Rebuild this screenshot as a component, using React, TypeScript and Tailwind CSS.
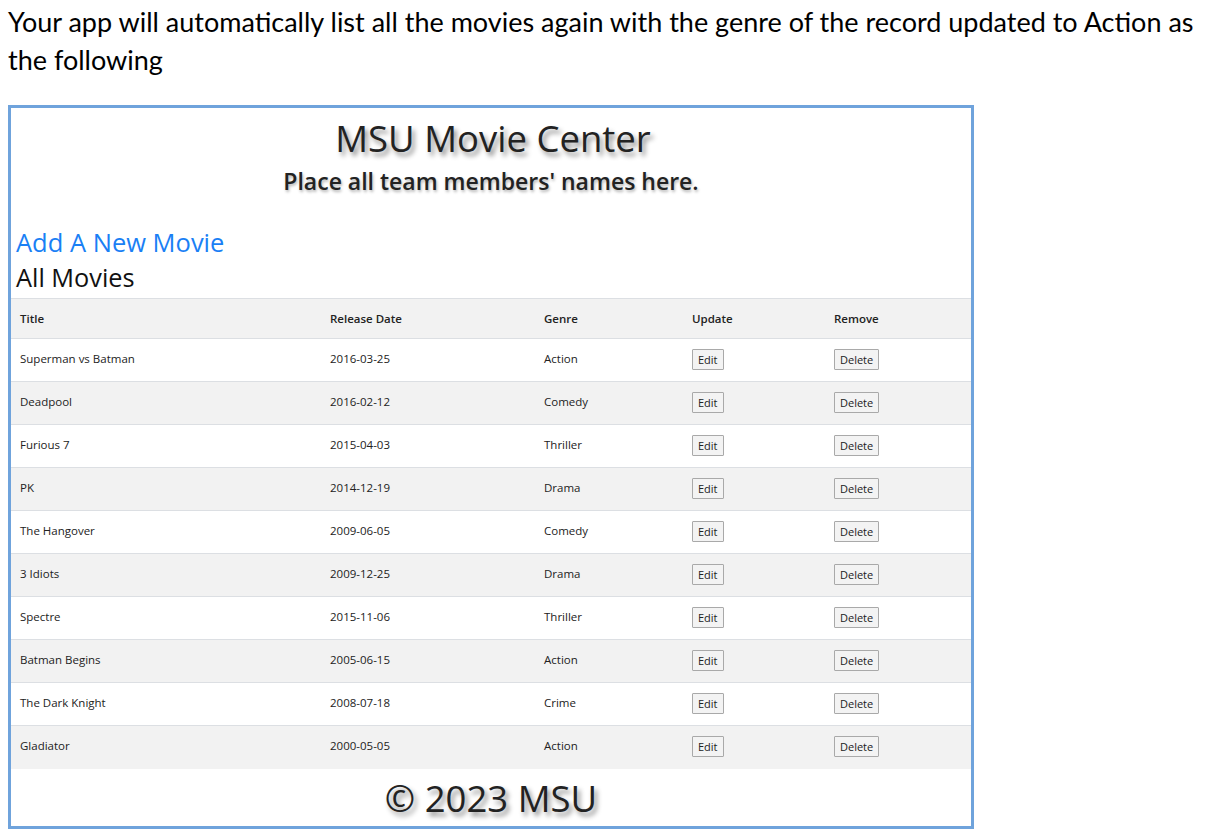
import { FC } from "react";

type Movie = {
	title: string;
	releaseDate: string;
	genre: string;
};

const movies: Array<Movie> = [
	{ title: "Superman vs Batman", releaseDate: "2016-03-25", genre: "Action" },
	{ title: "Deadpool", releaseDate: "2016-02-12", genre: "Comedy" },
	{ title: "Furious 7", releaseDate: "2015-04-03", genre: "Thriller" },
	{ title: "PK", releaseDate: "2014-12-19", genre: "Drama" },
	{ title: "The Hangover", releaseDate: "2009-06-05", genre: "Comedy" },
	{ title: "3 Idiots", releaseDate: "2009-12-25", genre: "Drama" },
	{ title: "Spectre", releaseDate: "2015-11-06", genre: "Thriller" },
	{ title: "Batman Begins", releaseDate: "2005-06-15", genre: "Action" },
	{ title: "The Dark Knight", releaseDate: "2008-07-18", genre: "Crime" },
	{ title: "Gladiator", releaseDate: "2000-05-05", genre: "Action" }
];

const SmallButton: FC<{ label: string }> = ({ label }) => (
	<button className="h-[21px] px-[5px] text-[11px] leading-none text-[#222] bg-[#f3f3f3] border border-[#a9a9a9] rounded-[1px]">
		{label}
	</button>
);

const MovieRow: FC<{ movie: Movie; index: number }> = ({ movie, index }) => (
	<tr className={`h-[43px] border-t border-[#dcdfe3] ${index % 2 === 1 ? "bg-[#f2f2f2]" : "bg-white"}`}>
		<td className="pl-[9px] align-top pt-[11px]">{movie.title}</td>
		<td className="pl-[9px] align-top pt-[11px]">{movie.releaseDate}</td>
		<td className="pl-[9px] align-top pt-[11px]">{movie.genre}</td>
		<td className="pl-[9px] align-top pt-[10px]">
			<SmallButton label="Edit" />
		</td>
		<td className="pl-[9px] align-top pt-[10px]">
			<SmallButton label="Delete" />
		</td>
	</tr>
);

export default function App() {
	return (
		<div className="w-[1210px] h-[839px] bg-white overflow-hidden">
			<div className="pl-[8px] pt-[3px] text-[27px] leading-[38px] text-black font-['Lato','Open_Sans',sans-serif]">
				<p className="whitespace-nowrap">
					Your app will automatically list all the movies again with the genre of the record updated to Action as
				</p>
				<p>the following</p>
			</div>

			<div className="ml-[8px] mt-[26px] w-[966px] h-[724px] border-[3px] border-[#6fa3dc] bg-white font-['Open_Sans','Noto_Sans',sans-serif]">
				<div className="flex flex-col items-center pt-[4px]">
					<h1 className="pl-[4px] text-[36.5px] leading-[52px] text-[#222] [text-shadow:3px_4px_5px_rgba(0,0,0,0.45)]">
						MSU Movie Center
					</h1>
					<h2 className="text-[23px] leading-[34px] font-semibold text-[#222] [text-shadow:1px_2px_3px_rgba(0,0,0,0.3)]">
						Place all team members&apos; names here.
					</h2>
				</div>

				<div className="px-[5px] pt-[27px]">
					<a className="block text-[25.5px] leading-[34px] font-medium text-[#1a7ff5]">Add A New Movie</a>
					<h3 className="text-[25.3px] leading-[36px] text-[#111]">All Movies</h3>
				</div>

				<table className="mt-[3px] w-full table-fixed border-collapse text-[11.5px] text-[#222]">
					<colgroup>
						<col className="w-[310px]" />
						<col className="w-[214px]" />
						<col className="w-[148px]" />
						<col className="w-[142px]" />
						<col />
					</colgroup>
					<thead>
						<tr className="h-[40px] bg-[#f2f2f2] border-t border-[#dcdfe3] text-left">
							<th className="pl-[9px] font-semibold">Title</th>
							<th className="pl-[9px] font-semibold">Release Date</th>
							<th className="pl-[9px] font-semibold">Genre</th>
							<th className="pl-[9px] font-semibold">Update</th>
							<th className="pl-[9px] font-semibold">Remove</th>
						</tr>
					</thead>
					<tbody>
						{movies.map((movie, index) => (
							<MovieRow key={movie.title} movie={movie} index={index} />
						))}
					</tbody>
				</table>

				<footer className="flex justify-center pt-[5px]">
					<span className="text-[36.5px] leading-[48px] text-[#222] [text-shadow:3px_4px_5px_rgba(0,0,0,0.45)]">
						© 2023 MSU
					</span>
				</footer>
			</div>
		</div>
	);
}
